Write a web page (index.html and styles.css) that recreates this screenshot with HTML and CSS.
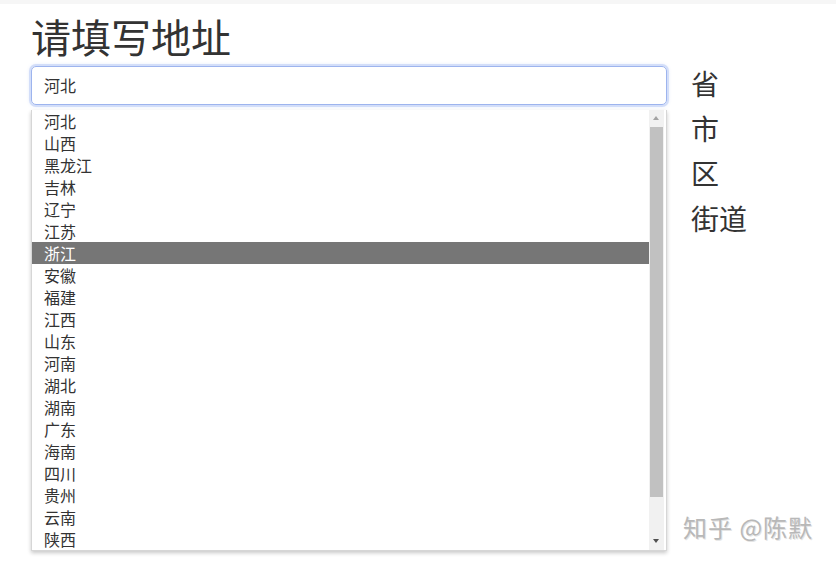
FILE: index.html
```html
<!DOCTYPE html>
<html lang="zh-CN">
<head>
<meta charset="utf-8">
<title>请填写地址</title>
<link rel="stylesheet" href="styles.css">
</head>
<body>
<div class="topbar"></div>
<main class="page">
  <h1 class="title">请填写地址</h1>
  <div class="row">
    <div class="picker">
      <div class="input">河北</div>
      <div class="dropdown">
        <ul class="options">
          <li>河北</li>
          <li>山西</li>
          <li>黑龙江</li>
          <li>吉林</li>
          <li>辽宁</li>
          <li>江苏</li>
          <li class="active">浙江</li>
          <li>安徽</li>
          <li>福建</li>
          <li>江西</li>
          <li>山东</li>
          <li>河南</li>
          <li>湖北</li>
          <li>湖南</li>
          <li>广东</li>
          <li>海南</li>
          <li>四川</li>
          <li>贵州</li>
          <li>云南</li>
          <li>陕西</li>
        </ul>
        <div class="scrollbar">
          <div class="arrow arrow-up"></div>
          <div class="track"><div class="thumb"></div></div>
          <div class="arrow arrow-down"></div>
        </div>
      </div>
    </div>
    <ul class="labels">
      <li>省</li>
      <li>市</li>
      <li>区</li>
      <li>街道</li>
    </ul>
  </div>
</main>
<div class="watermark">知乎 @陈默</div>
</body>
</html>
```
FILE: styles.css
```css
html, body {
  margin: 0;
  padding: 0;
  background: #ffffff;
}
body {
  font-family: "Noto Sans CJK SC", "Noto Sans", sans-serif;
  color: #333333;
  width: 836px;
  height: 562px;
  overflow: hidden;
  position: relative;
}
.topbar {
  height: 4px;
  background: #f6f6f6;
}
.page {
  padding-left: 31px;
}
.title {
  margin: 8px 0 6px 0;
  font-size: 40px;
  line-height: 48px;
  font-weight: 400;
  color: #333333;
}
.row {
  display: flex;
  align-items: flex-start;
}
.picker {
  width: 636px;
}
.input {
  box-sizing: border-box;
  height: 39px;
  border: 1px solid #9db4ee;
  border-radius: 5px;
  box-shadow: 0 0 0 2px #d3def9, 0 0 4px rgba(102, 140, 230, 0.45);
  padding-left: 12px;
  font-size: 16px;
  line-height: 37px;
  color: #333;
}
.dropdown {
  margin-top: 5px;
  height: 440px;
  display: flex;
  border: 1px solid #d6d6d6;
  border-top: none;
  box-shadow: 0 2px 4px rgba(0, 0, 0, 0.22);
  background: #fff;
}
.options {
  flex: 1;
  list-style: none;
  margin: 0;
  padding: 0;
}
.options li {
  height: 22px;
  line-height: 22px;
  padding-left: 12px;
  font-size: 16px;
  color: #333;
}
.options li.active {
  background: #767676;
  color: #ffffff;
}
.scrollbar {
  width: 15px;
  margin-right: 2px;
  background: #f1f1f1;
  display: flex;
  flex-direction: column;
}
.arrow {
  height: 17px;
  position: relative;
}
.arrow-up::after, .arrow-down::after {
  content: "";
  position: absolute;
  left: 4px;
  border-left: 3.5px solid transparent;
  border-right: 3.5px solid transparent;
}
.arrow-up::after {
  top: 6px;
  border-bottom: 4px solid #a3a3a3;
}
.arrow-down::after {
  top: 6px;
  border-top: 4px solid #505050;
}
.track {
  flex: 1;
}
.thumb {
  height: 370px;
  margin: 0 1px;
  background: #c1c1c1;
}
.labels {
  list-style: none;
  margin: -5px 0 0 24px;
  padding: 0;
}
.labels li {
  font-size: 28px;
  line-height: 45px;
  color: #333;
}
.watermark {
  position: absolute;
  left: 683px;
  top: 510px;
  font-size: 24px;
  line-height: 34px;
  color: #b8b8b8;
  text-shadow: 1px 1px 0 #e4e4e4;
  letter-spacing: 1px;
}
```
